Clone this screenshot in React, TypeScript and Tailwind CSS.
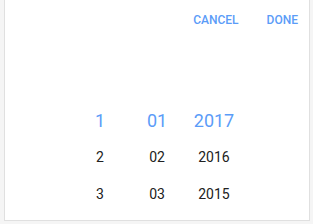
import React from "react";

const days = ["1", "2", "3"];
const months = ["01", "02", "03"];
const years = ["2017", "2016", "2015"];

function Column({ items }: { items: string[] }) {
  return (
    <div className="flex w-[57px] flex-col items-center">
      {items.map((v, i) => (
        <div
          key={v}
          className={
            i === 0
              ? "flex h-[37px] items-center text-[18px] text-[#5b9cf8]"
              : "flex h-[37px] items-center text-[14px] text-[#212121]"
          }
        >
          {v}
        </div>
      ))}
    </div>
  );
}

export default function App() {
  return (
    <div className="h-[224px] w-[313px] bg-[#f5f5f5] pl-[4px] pr-[3px]" style={{ fontFamily: "Roboto, 'Noto Sans', sans-serif" }}>
      <div className="flex h-[221px] flex-col border-b border-l border-r border-[#e0e0e0] bg-white">
        <div className="flex h-[39px] items-center justify-end gap-[28px] pr-[11px]">
          <button className="text-[12px] font-medium text-[#5b9cf8]">CANCEL</button>
          <button className="text-[12px] font-medium text-[#5b9cf8]">DONE</button>
        </div>
        <div className="mt-[63px] flex justify-center">
          <Column items={days} />
          <Column items={months} />
          <Column items={years} />
        </div>
      </div>
    </div>
  );
}
